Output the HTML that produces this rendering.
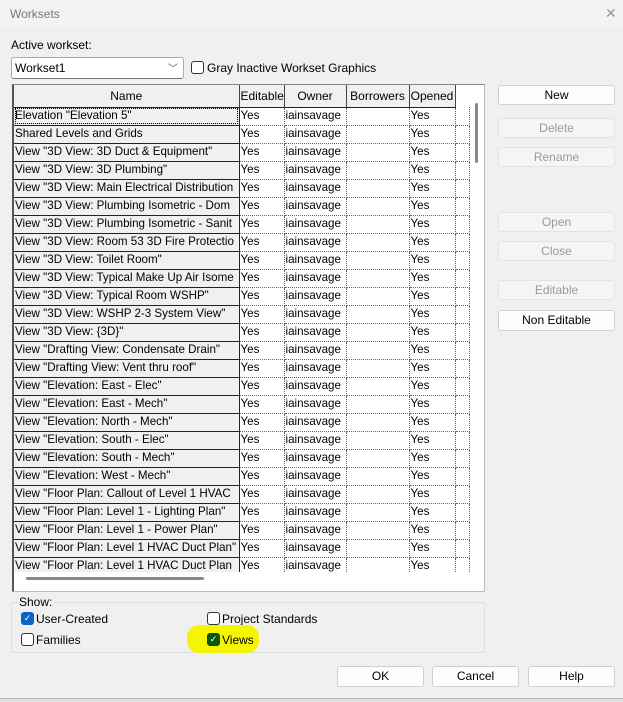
<!DOCTYPE html>
<html><head><style>
*{margin:0;padding:0;box-sizing:border-box}
body{width:623px;height:702px;background:#f0f0f0;font-family:"Liberation Sans",sans-serif;font-size:12px;color:#000;position:relative;overflow:hidden}
.a{position:absolute}
.btn{position:absolute;background:#fdfdfd;border:1px solid #d0d0d0;border-radius:3px;text-align:center;line-height:18px;font-size:12px}
.dis{background:#f5f5f5;border-color:#e3e3e3;color:#9a9a9a}
table{border-collapse:collapse;table-layout:fixed;font-size:11.6px}
td,th{height:18px;line-height:16px;white-space:nowrap;overflow:hidden;font-weight:normal;padding:0 1px}
th{height:22px;background:#f0f0f0;border-right:1px solid #444;border-bottom:1px solid #222;text-align:center;font-size:12px}
td.n{background:#f0f0f0;border:1px solid #222;border-left:none}
td.c{background:#fff;border-right:1px dotted #666;border-bottom:1px dotted #666}
.cb{position:absolute;width:13px;height:13px;border:1px solid #333;border-radius:3px;background:#fff}
</style></head><body>
<div class="a" style="left:0;top:0;width:623px;height:28px;background:#f3f3f3"></div>
<div class="a" style="left:10px;top:7px;color:#777;font-size:12px">Worksets</div>
<div class="a" style="left:605px;top:5px;color:#999;font-size:14px">✕</div>
<div class="a" style="left:11px;top:38px">Active workset:</div>
<div class="a" style="left:11px;top:57px;width:173px;height:22px;background:#fff;border:1px solid #aaa;border-bottom-color:#777;border-radius:3px;padding:3px 0 0 3px">Workset1<span style="position:absolute;right:5px;top:2px;color:#555;font-size:10px">﹀</span></div>
<div class="cb" style="left:191px;top:61px"></div>
<div class="a" style="left:207px;top:61px">Gray Inactive Workset Graphics</div>

<div class="a" style="left:12px;top:84px;width:473px;height:508px;background:#fff;border:1px solid #bbb;border-top:1px solid #888;border-left:2px solid #555;overflow:hidden">
<table style="width:455px">
<colgroup><col style="width:225px"><col style="width:45px"><col style="width:62px"><col style="width:63px"><col style="width:46px"><col style="width:14px"></colgroup>
<tr><th>Name</th><th>Editable</th><th>Owner</th><th>Borrowers</th><th>Opened</th><th style="border:none;background:#fff"></th></tr>
<tbody id="tb">
<tr><td class="n" style="outline:1px dotted #000;outline-offset:-2px">Elevation "Elevation 5"</td><td class="c">Yes</td><td class="c">iainsavage</td><td class="c"></td><td class="c">Yes</td><td class="c"></td></tr>
<tr><td class="n">Shared Levels and Grids</td><td class="c">Yes</td><td class="c">iainsavage</td><td class="c"></td><td class="c">Yes</td><td class="c"></td></tr>
<tr><td class="n">View "3D View: 3D Duct &amp; Equipment"</td><td class="c">Yes</td><td class="c">iainsavage</td><td class="c"></td><td class="c">Yes</td><td class="c"></td></tr>
<tr><td class="n">View "3D View: 3D Plumbing"</td><td class="c">Yes</td><td class="c">iainsavage</td><td class="c"></td><td class="c">Yes</td><td class="c"></td></tr>
<tr><td class="n">View "3D View: Main Electrical Distribution</td><td class="c">Yes</td><td class="c">iainsavage</td><td class="c"></td><td class="c">Yes</td><td class="c"></td></tr>
<tr><td class="n">View "3D View: Plumbing Isometric - Dom</td><td class="c">Yes</td><td class="c">iainsavage</td><td class="c"></td><td class="c">Yes</td><td class="c"></td></tr>
<tr><td class="n">View "3D View: Plumbing Isometric - Sanit</td><td class="c">Yes</td><td class="c">iainsavage</td><td class="c"></td><td class="c">Yes</td><td class="c"></td></tr>
<tr><td class="n">View "3D View: Room 53 3D Fire Protectio</td><td class="c">Yes</td><td class="c">iainsavage</td><td class="c"></td><td class="c">Yes</td><td class="c"></td></tr>
<tr><td class="n">View "3D View: Toilet Room"</td><td class="c">Yes</td><td class="c">iainsavage</td><td class="c"></td><td class="c">Yes</td><td class="c"></td></tr>
<tr><td class="n">View "3D View: Typical Make Up Air Isome</td><td class="c">Yes</td><td class="c">iainsavage</td><td class="c"></td><td class="c">Yes</td><td class="c"></td></tr>
<tr><td class="n">View "3D View: Typical Room WSHP"</td><td class="c">Yes</td><td class="c">iainsavage</td><td class="c"></td><td class="c">Yes</td><td class="c"></td></tr>
<tr><td class="n">View "3D View: WSHP 2-3 System View"</td><td class="c">Yes</td><td class="c">iainsavage</td><td class="c"></td><td class="c">Yes</td><td class="c"></td></tr>
<tr><td class="n">View "3D View: {3D}"</td><td class="c">Yes</td><td class="c">iainsavage</td><td class="c"></td><td class="c">Yes</td><td class="c"></td></tr>
<tr><td class="n">View "Drafting View: Condensate Drain"</td><td class="c">Yes</td><td class="c">iainsavage</td><td class="c"></td><td class="c">Yes</td><td class="c"></td></tr>
<tr><td class="n">View "Drafting View: Vent thru roof"</td><td class="c">Yes</td><td class="c">iainsavage</td><td class="c"></td><td class="c">Yes</td><td class="c"></td></tr>
<tr><td class="n">View "Elevation: East - Elec"</td><td class="c">Yes</td><td class="c">iainsavage</td><td class="c"></td><td class="c">Yes</td><td class="c"></td></tr>
<tr><td class="n">View "Elevation: East - Mech"</td><td class="c">Yes</td><td class="c">iainsavage</td><td class="c"></td><td class="c">Yes</td><td class="c"></td></tr>
<tr><td class="n">View "Elevation: North - Mech"</td><td class="c">Yes</td><td class="c">iainsavage</td><td class="c"></td><td class="c">Yes</td><td class="c"></td></tr>
<tr><td class="n">View "Elevation: South - Elec"</td><td class="c">Yes</td><td class="c">iainsavage</td><td class="c"></td><td class="c">Yes</td><td class="c"></td></tr>
<tr><td class="n">View "Elevation: South - Mech"</td><td class="c">Yes</td><td class="c">iainsavage</td><td class="c"></td><td class="c">Yes</td><td class="c"></td></tr>
<tr><td class="n">View "Elevation: West - Mech"</td><td class="c">Yes</td><td class="c">iainsavage</td><td class="c"></td><td class="c">Yes</td><td class="c"></td></tr>
<tr><td class="n">View "Floor Plan: Callout of Level 1 HVAC</td><td class="c">Yes</td><td class="c">iainsavage</td><td class="c"></td><td class="c">Yes</td><td class="c"></td></tr>
<tr><td class="n">View "Floor Plan: Level 1 - Lighting Plan"</td><td class="c">Yes</td><td class="c">iainsavage</td><td class="c"></td><td class="c">Yes</td><td class="c"></td></tr>
<tr><td class="n">View "Floor Plan: Level 1 - Power Plan"</td><td class="c">Yes</td><td class="c">iainsavage</td><td class="c"></td><td class="c">Yes</td><td class="c"></td></tr>
<tr><td class="n">View "Floor Plan: Level 1 HVAC Duct Plan"</td><td class="c">Yes</td><td class="c">iainsavage</td><td class="c"></td><td class="c">Yes</td><td class="c"></td></tr>
<tr><td class="n">View "Floor Plan: Level 1 HVAC Duct Plan</td><td class="c">Yes</td><td class="c">iainsavage</td><td class="c"></td><td class="c">Yes</td><td class="c"></td></tr>
</tbody></table>
<div class="a" style="left:0;top:487px;width:471px;height:21px;background:#fff"></div>
<div class="a" style="left:12px;top:492px;width:178px;height:3px;background:#888;border-radius:2px"></div>
<div class="a" style="left:456px;top:0;width:15px;height:487px;background:#fff"></div>
<div class="a" style="left:461px;top:18px;width:3px;height:60px;background:#888;border-radius:2px"></div>
</div>

<div class="btn" style="left:498px;top:85px;width:117px;height:20px">New</div>
<div class="btn dis" style="left:498px;top:118px;width:117px;height:20px">Delete</div>
<div class="btn dis" style="left:498px;top:147px;width:117px;height:20px">Rename</div>
<div class="btn dis" style="left:498px;top:212px;width:117px;height:20px">Open</div>
<div class="btn dis" style="left:498px;top:241px;width:117px;height:20px">Close</div>
<div class="btn dis" style="left:498px;top:280px;width:117px;height:20px">Editable</div>
<div class="btn" style="left:498px;top:310px;width:117px;height:21px">Non Editable</div>

<div class="a" style="left:11px;top:602px;width:474px;height:51px;border:1px solid #ddd"></div>
<div class="a" style="left:17px;top:595px;background:#f0f0f0;padding:0 2px">Show:</div>
<div class="cb" style="left:21px;top:612px;background:#0a63c9;border-color:#0a63c9;color:#fff;font-size:9px;line-height:11px;text-align:center">✓</div>
<div class="a" style="left:36px;top:612px">User-Created</div>
<div class="cb" style="left:21px;top:633px"></div>
<div class="a" style="left:36px;top:633px">Families</div>
<div class="cb" style="left:207px;top:612px"></div>
<div class="a" style="left:222px;top:612px">Project Standards</div>
<div class="a" style="left:187px;top:625px;width:72px;height:28px;background:#f5f500;border-radius:12px"></div>
<div class="cb" style="left:207px;top:633px;background:#0a5a0a;border-color:#333;color:#fff;font-size:9px;line-height:11px;text-align:center">✓</div>
<div class="a" style="left:222px;top:633px">Views</div>

<div class="btn" style="left:337px;top:666px;width:87px;height:21px">OK</div>
<div class="btn" style="left:432px;top:666px;width:87px;height:21px">Cancel</div>
<div class="btn" style="left:528px;top:666px;width:87px;height:21px">Help</div>
<div class="a" style="left:0;top:698px;width:623px;height:4px;background:#e0e0e0;border-top:1px solid #bbb"></div>
</body></html>
